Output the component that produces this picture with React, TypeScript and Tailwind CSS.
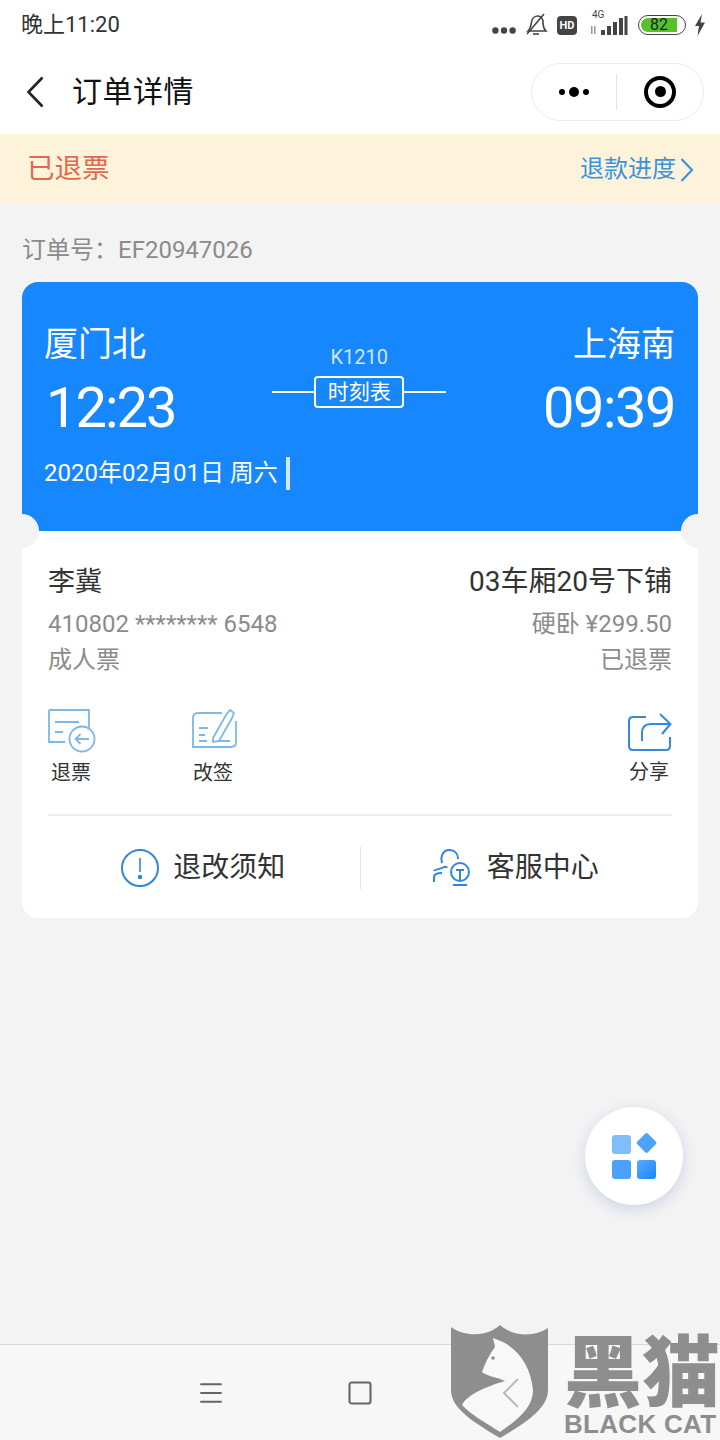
import { Menu, Square } from 'lucide-react';

const font = { cjk: "font-['Roboto','Noto_Sans_CJK_SC',sans-serif]" };

function StatusBar() {
  return (
    <div className="h-[50px] flex items-center justify-between pl-[21px] pr-[14px] bg-white">
      <span className="text-[22px] leading-none text-[#333]">晚上11:20</span>
      <div className="flex items-center">
        <svg width="24" height="7" viewBox="0 0 24 7" className="mt-[10px]" fill="#444">
          <circle cx="3.4" cy="3.5" r="3.2" />
          <circle cx="12" cy="3.5" r="3.2" />
          <circle cx="20.6" cy="3.5" r="3.2" />
        </svg>
        <svg width="24" height="24" viewBox="0 0 24 24" className="ml-[8px]" fill="none" stroke="#444" strokeWidth="1.6">
          <path d="M4 18 C7 15 7 12 7.5 9 C8 5 11 3 14 3 C17 3 19 6 19 9 C19 13 20 16 22 18 Z" />
          <path d="M9 21 H15" />
          <path d="M20 1 L3 21" />
        </svg>
        <div className="ml-[9px] w-[20px] h-[19px] rounded-[4px] bg-[#444] text-white text-[11px] font-bold leading-[19px] text-center">HD</div>
        <div className="ml-[13px] relative w-[38px] h-[24px]">
          <span className="absolute left-[2px] -top-[5px] text-[10px] leading-[14px] text-[#444]">4G</span>
          <svg width="38" height="24" viewBox="0 0 38 24" fill="#444">
            <rect x="1" y="13" width="1.5" height="8" fill="#999" />
            <rect x="4" y="13" width="1.5" height="8" fill="#999" />
            <rect x="11" y="17" width="4" height="5" />
            <rect x="17" y="13" width="4" height="9" />
            <rect x="23" y="9" width="4" height="13" />
            <rect x="29" y="5" width="4" height="17" />
            <rect x="34.5" y="3" width="3" height="19" />
          </svg>
        </div>
        <div className="ml-[10px] w-[48px] h-[20px] rounded-full border-[1.5px] border-[#444] p-[2px] flex">
          <div className="w-[36px] h-full rounded-l-full rounded-r-[5px] bg-[#54c22a] text-[16px] leading-[13px] text-center text-[#222]">82</div>
        </div>
        <svg width="12" height="22" viewBox="0 0 12 22" className="ml-[8px]" fill="#444">
          <path d="M8 0 L1 12 H5 L3.5 22 L11 8.5 H6.5 Z" />
        </svg>
      </div>
    </div>
  );
}

function NavBar() {
  return (
    <div className="h-[84px] flex items-center justify-between pl-[26px] pr-[16px] bg-white">
      <div className="flex items-center">
        <svg width="18" height="32" viewBox="0 0 18 32" fill="none" stroke="#222" strokeWidth="2.6">
          <path d="M16.5 1.5 L2.5 16 L16.5 30.5" />
        </svg>
        <span className="ml-[28px] text-[30px] leading-none tracking-[0.5px] text-[#111]">订单详情</span>
      </div>
      <div className="w-[173px] h-[58px] rounded-full border border-[#ececec] flex items-center mb-[1px]">
        <div className="flex-1 flex items-center justify-center gap-[4px]">
          <span className="w-[6px] h-[6px] rounded-full bg-black" />
          <span className="w-[10px] h-[10px] rounded-full bg-black" />
          <span className="w-[6px] h-[6px] rounded-full bg-black" />
        </div>
        <div className="w-px h-[36px] bg-[#e4e4e4]" />
        <div className="w-[86px] flex items-center justify-center">
          <div className="w-[32px] h-[32px] rounded-full border-[4px] border-black flex items-center justify-center">
            <span className="w-[11px] h-[11px] rounded-full bg-black" />
          </div>
        </div>
      </div>
    </div>
  );
}

function TicketHeader() {
  return (
    <div className="relative h-[249px] bg-[#1787fe] rounded-t-[16px] text-white pl-[22px] pr-[23px] pt-[38px]">
      <div className="flex justify-between items-start">
        <div>
          <div className="text-[34px] leading-[48px]">厦门北</div>
          <div className="text-[56px] leading-[64px] mt-[8px] ml-[2px] tracking-[-2px]">12:23</div>
        </div>
        <div className="flex flex-col items-center mt-[25px]">
          <div className="text-[20px] leading-[24px] text-[#cfe5ff]">K1210</div>
          <div className="flex items-center mt-[7px]">
            <span className="w-[42px] h-[2px] bg-white" />
            <span className="w-[90px] h-[32px] border-2 border-white rounded-[4px] text-[21px] leading-[28px] text-center">时刻表</span>
            <span className="w-[42px] h-[2px] bg-white" />
          </div>
        </div>
        <div className="text-right">
          <div className="text-[34px] leading-[48px]">上海南</div>
          <div className="text-[56px] leading-[64px] mt-[8px] tracking-[-1.5px]">09:39</div>
        </div>
      </div>
      <div className="flex items-center mt-[15px]">
        <span className="text-[24px] leading-[36px]">2020年02月01日 周六</span>
        <span className="ml-[8px] w-[4px] h-[33px] bg-[#d6e8ff]" />
      </div>
      <span className="absolute -left-[17px] top-[232px] w-[34px] h-[34px] rounded-full bg-[#f3f3f4]" />
      <span className="absolute -right-[17px] top-[232px] w-[34px] h-[34px] rounded-full bg-[#f3f3f4]" />
    </div>
  );
}

function RefundIcon() {
  return (
    <svg width="48" height="46" viewBox="0 0 48 46" fill="none" stroke="#7db8ea" strokeWidth="1.8">
      <path d="M1 1 H41 V19" />
      <path d="M1 1 V33 H17" />
      <path d="M7 13 H31 M7 23 H15" />
      <circle cx="34" cy="30" r="12.5" />
      <path d="M41 30 H28 M32.5 25 L27.5 30 L32.5 35" />
    </svg>
  );
}

function RebookIcon() {
  return (
    <svg width="46" height="46" viewBox="0 0 46 46" fill="none" stroke="#7db8ea" strokeWidth="1.8">
      <path d="M30 4 H6 Q1 4 1 9 V38 H39 Q44 38 44 33 V12" />
      <path d="M7 19 H16 M7 26 H13 M7 32 H15 M27 32 H38" />
      <path d="M21 29 L34 6 L38 1 L42 4 L40 9 L27 32 L21 33 Z" fill="#fff" />
    </svg>
  );
}

function ShareIcon() {
  return (
    <svg width="44" height="40" viewBox="0 0 44 40" fill="none" stroke="#2f8ae4" strokeWidth="2">
      <path d="M18 4 H5 Q1 4 1 8 V33 Q1 37 5 37 H38 Q42 37 42 33 V24" />
      <path d="M14 28 V20 Q14 11 23 11 H42" />
      <path d="M32 1 L42.5 11 L34 21" />
    </svg>
  );
}

function ServiceIcon() {
  return (
    <svg width="38" height="38" viewBox="0 0 38 38" fill="none" stroke="#2f86dc" strokeWidth="2">
      <path d="M9 14 C7 6 11 1 16 1 C22 1 25 5 25 10" />
      <path d="M1 22 C2 20 6 21 11 18 C13 17 14 19 14 19" />
      <path d="M1 33 V28 C1 25 5 24 9 24" />
      <circle cx="27" cy="23" r="9" />
      <path d="M23 21 H31 M27 21 V32 M20 36 H34" />
    </svg>
  );
}

function Passenger() {
  return (
    <div className="flex-1 bg-white rounded-b-[16px] px-[26px] pt-[31px]">
      <div className="flex justify-between">
        <div className="text-[27px] leading-[40px] text-[#333]">李冀</div>
        <div className="text-[28px] leading-[40px] text-[#333]">03车厢20号下铺</div>
      </div>
      <div className="flex justify-between text-[#8b8b8b] text-[24px] leading-[36px] mt-[4px]">
        <div>410802 ******** 6548</div>
        <div>硬卧 ¥299.50</div>
      </div>
      <div className="flex justify-between text-[#8b8b8b] text-[24px] leading-[36px]">
        <div>成人票</div>
        <div>已退票</div>
      </div>
      <div className="flex justify-between mt-[31px] h-[76px]">
        <div className="flex">
          <div className="w-[144px]">
            <RefundIcon />
            <div className="text-[20px] leading-[28px] text-[#333] ml-[3px] mt-[4px]">退票</div>
          </div>
          <div>
            <RebookIcon />
            <div className="text-[20px] leading-[28px] text-[#333] ml-[1px] mt-[4px]">改签</div>
          </div>
        </div>
        <div className="flex flex-col items-end">
          <div className="mt-[4px]"><ShareIcon /></div>
          <div className="text-[20px] leading-[28px] text-[#333] mt-[5px] mr-[3px]">分享</div>
        </div>
      </div>
      <div className="h-[2px] bg-[#ececec] mt-[29px]" />
      <div className="flex items-center h-[100px] mt-[2px]">
        <div className="flex-1 flex items-center justify-center gap-[14px] pr-[1px]">
          <svg width="38" height="38" viewBox="0 0 38 38" fill="none" stroke="#2f86dc" strokeWidth="2">
            <circle cx="19" cy="19" r="18" />
            <path d="M19 9 V23" strokeWidth="1.6" />
            <circle cx="19" cy="28" r="1.2" fill="#2f86dc" />
          </svg>
          <span className="text-[28px] leading-none text-[#333]">退改须知</span>
        </div>
        <div className="w-px h-[42px] bg-[#e2e2e2]" />
        <div className="flex-1 flex items-center justify-center gap-[16px] pr-[1px]">
          <ServiceIcon />
          <span className="text-[28px] leading-none text-[#333]">客服中心</span>
        </div>
      </div>
    </div>
  );
}

function Watermark() {
  return (
    <div className="absolute left-[451px] top-[1325px] w-[269px] h-[115px] flex">
      <svg width="98" height="114" viewBox="0 0 98 114" className="shrink-0">
        <path d="M0 2 C14 12 36 12 49 0 C62 12 84 12 97 3 V65 C97 84 74 98 49 113 C24 98 0 84 0 65 Z" fill="#8e8e8f" />
        <path d="M42 13 L52 17 C68 25 80 42 82 65 C82 82 68 94 49 107 C34 97 20 90 11 80 C16 70 34 62 54 56 C46 52 38 52 31 47 C34 38 38 30 44 22 Z" fill="#f8f8f8" />
        <circle cx="42" cy="33" r="1.8" fill="#8e8e8f" />
      </svg>
      <div className="ml-[15px] flex-1 pt-[3px]">
        <div className="text-[78px] leading-[78px] font-black text-[#8e8e8f] whitespace-nowrap font-['Noto_Sans_CJK_SC',sans-serif]">黑猫</div>
        <div className="text-[26px] leading-[22px] font-black text-[#8e8e8f] tracking-[0.3px] whitespace-nowrap font-['Liberation_Sans',sans-serif] mt-[7px]">BLACK CAT</div>
      </div>
    </div>
  );
}

export default function App() {
  return (
    <div className={`relative w-[720px] h-[1440px] overflow-hidden flex flex-col bg-[#f3f3f4] ${font.cjk}`}>
      <StatusBar />
      <NavBar />
      <div className="h-[69px] bg-[#fdf3da] flex items-center justify-between pl-[27px] pr-[26px]">
        <span className="text-[27.5px] leading-none text-[#e2684f]">已退票</span>
        <div className="flex items-center text-[#3a93de]">
          <span className="text-[24px] leading-none">退款进度</span>
          <svg width="14" height="24" viewBox="0 0 14 24" fill="none" stroke="#3a93de" strokeWidth="2.2" className="ml-[4px] mt-[3px]">
            <path d="M1.5 1 L12 12 L1.5 23" />
          </svg>
        </div>
      </div>
      <div className="px-[22px] mt-[29px] text-[24px] leading-[36px] text-[#8b8b8b]">订单号：EF20947026</div>
      <div className="mx-[22px] mt-[14px] h-[636px] flex flex-col">
        <TicketHeader />
        <Passenger />
      </div>
      <div className="mt-auto h-[96px] bg-[#f7f7f8] border-t border-[#d8d8d8] flex items-center justify-center gap-[120px] pl-[4px]">
        <Menu size={30} strokeWidth={1.5} className="text-[#666]" />
        <Square size={28} strokeWidth={1.8} className="text-[#666]" />
        <svg width="34" height="30" viewBox="0 0 34 30" fill="none" stroke="#bbb" strokeWidth="2" className="relative z-10">
          <path d="M24 1 L10 15 L24 29" />
        </svg>
      </div>
      <div className="absolute left-[585px] top-[1107px] w-[98px] h-[98px] rounded-full bg-white shadow-[0_4px_14px_rgba(120,140,190,0.3)] flex items-center justify-center">
        <svg width="46" height="46" viewBox="0 0 46 46">
          <defs>
            <linearGradient id="g" x1="0" y1="0" x2="1" y2="1">
              <stop offset="0" stopColor="#5aa9fd" />
              <stop offset="1" stopColor="#1a85fb" />
            </linearGradient>
          </defs>
          <rect x="1" y="2" width="19" height="19" rx="3" fill="#7fbdfd" />
          <rect x="27" y="2" width="15" height="15" rx="2" transform="rotate(45 34.5 11)" fill="#4da2fc" />
          <rect x="1" y="27" width="19" height="19" rx="3" fill="#4ba1fc" />
          <rect x="26" y="27" width="19" height="19" rx="3" fill="url(#g)" />
        </svg>
      </div>
      <Watermark />
    </div>
  );
}
